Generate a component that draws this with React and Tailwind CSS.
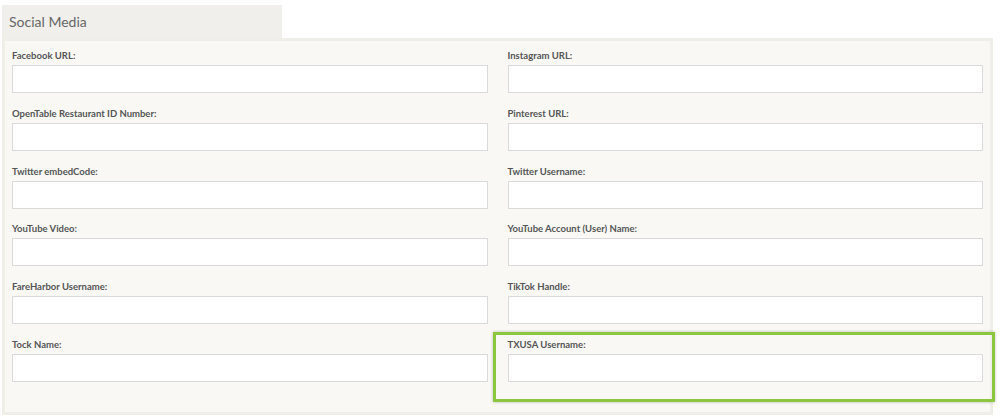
import React from "react";

const fields = [
  ["Facebook URL:", "Instagram URL:"],
  ["OpenTable Restaurant ID Number:", "Pinterest URL:"],
  ["Twitter embedCode:", "Twitter Username:"],
  ["YouTube Video:", "YouTube Account (User) Name:"],
  ["FareHarbor Username:", "TikTok Handle:"],
  ["Tock Name:", "TXUSA Username:"],
];

const Field = ({ label, highlight }) => (
  <div className="relative">
    {highlight && (
      <div className="absolute -top-[8px] -bottom-[20px] -left-[15px] -right-[12px] border-[3px] border-[#8cc63f] shadow-[0_0_3px_rgba(0,0,0,0.25)] pointer-events-none" />
    )}
    <label className="block text-[9.5px] leading-[10px] font-bold text-[#555] mb-[4px]">{label}</label>
    <input className="block w-full h-[28px] bg-white border border-[#dadada] outline-none" />
  </div>
);

export default function App() {
  return (
    <div className="bg-white min-h-[417px] pt-[5px] pl-[2px]" style={{ fontFamily: "Lato, 'Open Sans', sans-serif" }}>
      <div className="w-[280px] h-[33px] bg-[#f0efeb] flex items-center pl-[7px] text-[14px] text-[#666]">
        Social Media
      </div>
      <div className="w-[991px] border-[3px] border-[#efeee9] bg-[#f9f8f5] pt-[10px] pb-[30px] px-[7px]">
        <div className="grid grid-cols-2 gap-x-[20px] gap-y-[15.8px]">
          {fields.map(([a, b], i) => (
            <React.Fragment key={i}>
              <Field label={a} />
              <Field label={b} highlight={i === fields.length - 1} />
            </React.Fragment>
          ))}
        </div>
      </div>
    </div>
  );
}
